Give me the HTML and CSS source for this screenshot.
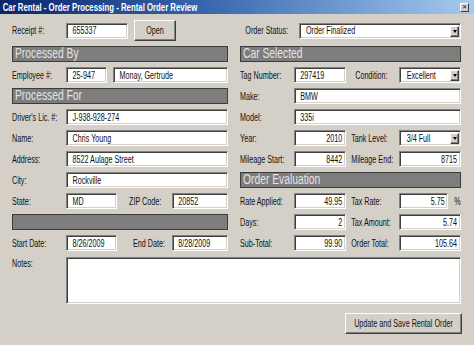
FILE: index.html
```html
<!DOCTYPE html>
<html>
<head>
<meta charset="utf-8">
<title>Car Rental - Order Processing - Rental Order Review</title>
<link rel="stylesheet" href="styles.css">
</head>
<body>
<div class="window">
  <div class="titlebar">
    <span class="title t">Car Rental - Order Processing - Rental Order Review</span>
    <span class="close">&#x2715;</span>
  </div>
  <div class="content">
    <div class="grid toprow">
      <div class="row tall">
        <span class="lbl t">Receipt #:</span>
        <div class="field w-receipt"><span class="t">655337</span></div>
        <div class="btn open"><span class="t">Open</span></div>
      </div>
      <div class="row tall">
        <span class="lbl status t">Order Status:</span>
        <div class="field select grow"><span class="t">Order Finalized</span><span class="drop"></span></div>
      </div>
    </div>

    <div class="grid columns">
      <div class="col">
        <div class="hdr"><span class="t">Processed By</span></div>
        <div class="row">
          <span class="lbl t">Employee #:</span>
          <div class="field w-emp"><span class="t">25-947</span></div>
          <div class="field grow emp-name"><span class="t">Monay, Gertrude</span></div>
        </div>
        <div class="hdr"><span class="t">Processed For</span></div>
        <div class="row"><span class="lbl t">Driver's Lic. #:</span><div class="field grow"><span class="t">J-938-928-274</span></div></div>
        <div class="row"><span class="lbl t">Name:</span><div class="field grow"><span class="t">Chris Young</span></div></div>
        <div class="row"><span class="lbl t">Address:</span><div class="field grow"><span class="t">8522 Aulage Street</span></div></div>
        <div class="row"><span class="lbl t">City:</span><div class="field grow"><span class="t">Rockville</span></div></div>
        <div class="row">
          <span class="lbl t">State:</span><div class="field w-short"><span class="t">MD</span></div>
          <span class="lbl2 zip t">ZIP Code:</span><div class="field grow"><span class="t">20852</span></div>
        </div>
        <div class="hdr"></div>
        <div class="row">
          <span class="lbl t">Start Date:</span><div class="field w-short"><span class="t">8/26/2009</span></div>
          <span class="lbl2 enddate t">End Date:</span><div class="field grow"><span class="t">8/28/2009</span></div>
        </div>
      </div>

      <div class="col">
        <div class="hdr"><span class="t">Car Selected</span></div>
        <div class="row">
          <span class="lbl r t">Tag Number:</span><div class="field w-num"><span class="t">297419</span></div>
          <span class="lbl2 r cond t">Condition:</span><div class="field select grow"><span class="t">Excellent</span><span class="drop"></span></div>
        </div>
        <div class="row"><span class="lbl r t">Make:</span><div class="field grow"><span class="t">BMW</span></div></div>
        <div class="row"><span class="lbl r t">Model:</span><div class="field grow"><span class="t">335i</span></div></div>
        <div class="row">
          <span class="lbl r t">Year:</span><div class="field w-num num"><span class="t">2010</span></div>
          <span class="lbl2 r t">Tank Level:</span><div class="field select grow"><span class="t">3/4 Full</span><span class="drop"></span></div>
        </div>
        <div class="row">
          <span class="lbl r t">Mileage Start:</span><div class="field w-num num"><span class="t">8442</span></div>
          <span class="lbl2 r t">Mileage End:</span><div class="field grow num"><span class="t">8715</span></div>
        </div>
        <div class="hdr"><span class="t">Order Evaluation</span></div>
        <div class="row">
          <span class="lbl r t">Rate Applied:</span><div class="field w-num num"><span class="t">49.95</span></div>
          <span class="lbl2 r t">Tax Rate:</span><div class="field w-tax num"><span class="t">5.75</span></div><span class="pct t">%</span>
        </div>
        <div class="row">
          <span class="lbl r t">Days:</span><div class="field w-num num"><span class="t">2</span></div>
          <span class="lbl2 r t">Tax Amount:</span><div class="field grow num"><span class="t">5.74</span></div>
        </div>
        <div class="row">
          <span class="lbl r t">Sub-Total:</span><div class="field w-num num"><span class="t">99.90</span></div>
          <span class="lbl2 r t">Order Total:</span><div class="field grow num"><span class="t">105.64</span></div>
        </div>
      </div>
    </div>

    <div class="notes">
      <span class="lbl notes-lbl t">Notes:</span>
      <div class="field area"></div>
    </div>

    <div class="footer">
      <div class="btn save"><span class="t">Update and Save Rental Order</span></div>
    </div>
  </div>
</div>
</body>
</html>
```

FILE: styles.css
```css
html, body {
  margin: 0;
  padding: 0;
  background: #d4d0c8;
}

.window {
  width: 474px;
  height: 345px;
  box-sizing: border-box;
  background: #d4d0c8;
  font-family: "Liberation Sans", Arial, sans-serif;
  font-size: 7.2px;
  color: #111;
  overflow: hidden;
}

/* glyphs of the original dialog are tall and narrow: stretch text vertically */
.t {
  display: inline-block;
  transform: scaleY(1.39);
  transform-origin: 50% 50%;
}

.titlebar {
  height: 14px;
  display: flex;
  align-items: center;
  justify-content: space-between;
  padding: 0 5px 0 2.7px;
  background: linear-gradient(to right, #0a246a 0%, #3a6ab0 45%, #a6caf0 100%);
}

.title {
  color: #fff;
  font-weight: bold;
  font-size: 7.8px;
  line-height: 9px;
  white-space: nowrap;
}

.close {
  width: 9px;
  height: 9px;
  box-sizing: border-box;
  background: #d4d0c8;
  border: 1px solid;
  border-color: #fff #404040 #404040 #fff;
  display: flex;
  align-items: center;
  justify-content: center;
  font-family: "DejaVu Sans", sans-serif;
  font-size: 6px;
  font-weight: bold;
  color: #000;
  line-height: 1;
}

.content {
  padding: 6px 13.5px 0 12px;
}

.grid {
  display: grid;
  grid-template-columns: 216px 220.5px;
  column-gap: 12px;
}

.col {
  display: flex;
  flex-direction: column;
  gap: 5px;
}

.columns {
  margin-top: 5px;
}

.row {
  height: 16px;
  display: flex;
  align-items: center;
}

.row.tall {
  height: 21px;
}

.lbl {
  width: 54px;
  flex: none;
  white-space: nowrap;
  transform-origin: 0 50%;
}

.lbl.r {
  width: 53.7px;
}

.lbl.status {
  width: 58.5px;
  padding-left: 5.3px;
  box-sizing: border-box;
}

.lbl2 {
  flex: none;
  width: 54.7px;
  box-sizing: border-box;
  white-space: nowrap;
}

.lbl2.zip { padding-left: 12px; }
.lbl2.enddate { padding-left: 16px; }

.lbl2.r {
  width: 53.5px;
  padding-left: 5.5px;
}

.lbl2.r.cond { padding-left: 9.5px; }

.pct {
  padding-left: 6px;
}

.field {
  height: 16px;
  box-sizing: border-box;
  background: #fff;
  border: 1px solid;
  border-color: #808080 #fff #fff #808080;
  box-shadow: inset 1px 1px 0 #404040, inset -1px -1px 0 #d4d0c8;
  display: flex;
  align-items: center;
  padding: 0 2px 0 5.5px;
  white-space: nowrap;
  overflow: hidden;
  flex: none;
}

.field.grow { flex: 1; }
.field.num { justify-content: flex-end; padding-right: 2.5px; }

.w-receipt { width: 62px; }
.w-emp { width: 41px; }
.emp-name { margin-left: 6px; }
.w-short { width: 51px; }
.w-num { width: 52px; }
.w-tax { width: 49px; }

.select {
  position: relative;
  padding-left: 6.5px;
}

.drop {
  position: absolute;
  right: 0.5px;
  top: 2px;
  bottom: 1px;
  width: 9px;
  box-sizing: border-box;
  background: #d4d0c8;
  border: 1px solid;
  border-color: #fff #404040 #404040 #fff;
  box-shadow: inset -1px -1px 0 #808080;
  display: flex;
  align-items: center;
  justify-content: center;
}

.drop::after {
  content: "";
  border-left: 2.5px solid transparent;
  border-right: 2.5px solid transparent;
  border-top: 3px solid #000;
}

.btn {
  box-sizing: border-box;
  background: #d4d0c8;
  border: 1px solid;
  border-color: #fff #404040 #404040 #fff;
  box-shadow: inset -1px -1px 0 #808080;
  display: flex;
  align-items: center;
  justify-content: center;
  white-space: nowrap;
  flex: none;
}

.btn.open {
  width: 42px;
  height: 21px;
  margin-left: 6px;
}

.hdr {
  height: 16px;
  box-sizing: border-box;
  background: #7d7d7d;
  border: 1px solid #3c3c3c;
  color: #e4e4e4;
  font-size: 10.3px;
  line-height: 14px;
  padding-left: 2px;
  white-space: nowrap;
}

.notes {
  display: flex;
  align-items: flex-start;
  margin-top: 6px;
  height: 47px;
}

.notes-lbl {
  margin-top: 2px;
}

.field.area {
  flex: 1;
  height: 47px;
}

.footer {
  display: flex;
  justify-content: flex-end;
  margin-top: 9px;
  margin-right: -1.5px;
}

.btn.save {
  width: 117px;
  height: 21px;
}
```
